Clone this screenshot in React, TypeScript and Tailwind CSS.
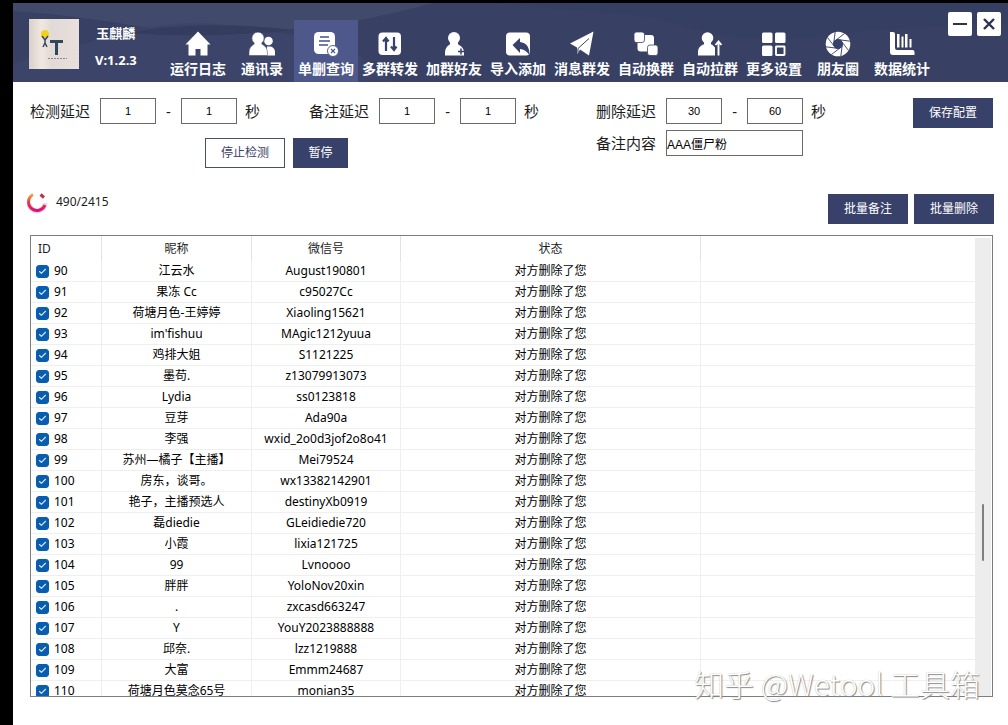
import type { ReactNode } from 'react'
import { Check } from 'lucide-react'

// ─── Data ────────────────────────────────────────────────────────────────────

const ROWS: [number, string, string][] = [
  [90, '江云水', 'August190801'],
  [91, '果冻 Cc', 'c95027Cc'],
  [92, '荷塘月色-王婷婷', 'Xiaoling15621'],
  [93, "im'fishuu", 'MAgic1212yuua'],
  [94, '鸡排大姐', 'S1121225'],
  [95, '墨苟.', 'z13079913073'],
  [96, 'Lydia', 'ss0123818'],
  [97, '豆芽', 'Ada90a'],
  [98, '李强', 'wxid_2o0d3jof2o8o41'],
  [99, '苏州—橘子【主播】', 'Mei79524'],
  [100, '房东，谈哥。', 'wx13382142901'],
  [101, '艳子，主播预选人', 'destinyXb0919'],
  [102, '磊diedie', 'GLeidiedie720'],
  [103, '小霞', 'lixia121725'],
  [104, '99', 'Lvnoooo'],
  [105, '胖胖', 'YoloNov20xin'],
  [106, '.', 'zxcasd663247'],
  [107, 'Y', 'YouY2023888888'],
  [108, '邱奈.', 'lzz1219888'],
  [109, '大富', 'Emmm24687'],
  [110, '荷塘月色莫念65号', 'monian35'],
]

const STATUS = '对方删除了您'

// ─── Toolbar icons ───────────────────────────────────────────────────────────

function Icon({ children }: { children: ReactNode }) {
  return (
    <svg viewBox="0 0 26 26" className="h-[26px] w-[26px]" fill="#fff" aria-hidden>
      {children}
    </svg>
  )
}

const INK = '#38416a'

const NAV: { label: string; icon: ReactNode }[] = [
  {
    label: '运行日志',
    icon: <path d="M13 0.5 25.5 13.5H22.5V24.5H15.5V18H10.5V24.5H3.5V13.5H0.5Z" />,
  },
  {
    label: '通讯录',
    icon: (
      <>
        <circle cx="19.5" cy="10" r="4.3" />
        <path d="M18 15.5h4q4 1.500 4 5.500v3.500h-8z" />
        <circle cx="9" cy="7.2" r="6.2" stroke={INK} strokeWidth="0.8" />
        <path
          d="M5 13h8q5.500 3 5.500 8v3.500H0V21q0-5 5-8z"
          stroke={INK}
          strokeWidth="0.5"
        />
        <path d="M5.500 11h7v4h-7z" />
      </>
    ),
  },
  {
    label: '单删查询',
    icon: (
      <>
        <rect x="1" y="1" width="21" height="22" rx="4.500" />
        <path d="M7 6h9M6 10h11M6 14h9" stroke="#46508a" strokeWidth="1.400" fill="none" />
        <circle cx="20" cy="20" r="5.500" stroke="#46508a" strokeWidth="0.900" />
        <path d="m18 18 4 4m0-4-4 4" stroke="#46508a" strokeWidth="1.100" />
      </>
    ),
  },
  {
    label: '多群转发',
    icon: (
      <>
        <rect x="1.500" y="1.500" width="22.500" height="22.500" rx="4" />
        <path
          d="M9 20V8M6 10.500 9 7l2.500 3.500M17 6v12M14 15.500l3 3.500 2.500-3.500"
          stroke={INK}
          strokeWidth="2.200"
          fill="none"
        />
      </>
    ),
  },
  {
    label: '加群好友',
    icon: (
      <>
        <circle cx="13" cy="7" r="6" />
        <path d="M9 11h8v3H9z" />
        <path d="M8.500 13.500h9q5.500 3 5.500 8v3H4v-3q0-5 4.500-8z" />
        <path d="M20 17.500v6M17 20.500h6" stroke={INK} strokeWidth="1.500" />
      </>
    ),
  },
  {
    label: '导入添加',
    icon: (
      <>
        <rect x="1" y="1.500" width="24" height="23" rx="4" />
        <path d="M15 7v4q9.500 1 9.500 13-4.500-6-9.500-6v4L7.500 14Z" fill={INK} />
      </>
    ),
  },
  {
    label: '消息群发',
    icon: (
      <>
        <path d="M24.500 0.500 20 24.500 11 18.500 8.500 23 8 16.500 1 12.500Z" />
        <path d="M20 7.500 9 17.500v4" stroke={INK} strokeWidth="1" fill="none" />
      </>
    ),
  },
  {
    label: '自动换群',
    icon: (
      <>
        <rect x="4.500" y="4" width="16.500" height="16.500" rx="3" />
        <rect x="1" y="1" width="10.500" height="10.500" rx="2.500" stroke={INK} strokeWidth="0.800" />
        <rect x="14.500" y="14" width="10.500" height="10.500" rx="2.500" stroke={INK} strokeWidth="0.800" />
      </>
    ),
  },
  {
    label: '自动拉群',
    icon: (
      <>
        <circle cx="10.500" cy="7" r="5.800" />
        <path d="M7 11h7v3H7z" />
        <path d="M6 13.500h9l3 3v8H1v-4q0-4.500 5-7z" />
        <path d="M21.500 24.500V11M18.500 14l3-3.500 3 3.500" stroke={INK} strokeWidth="4" fill="none" />
        <path d="M21.500 24.500V11M18.500 14l3-3.500 3 3.500" stroke="#fff" strokeWidth="1.900" fill="none" />
      </>
    ),
  },
  {
    label: '更多设置',
    icon: (
      <>
        <rect x="1" y="1.500" width="10.500" height="10.500" rx="1.500" />
        <rect x="14" y="1.500" width="10.500" height="10.500" rx="1.500" />
        <rect x="1" y="14.500" width="10.500" height="10.500" rx="1.500" />
        <rect x="15" y="15.500" width="8.500" height="8.500" rx="0.500" fill="none" stroke="#fff" strokeWidth="1.900" />
      </>
    ),
  },
  {
    label: '朋友圈',
    icon: (
      <>
        <circle cx="13" cy="13" r="12.300" />
        <circle cx="13" cy="13" r="4.800" fill={INK} />
        {[0, 45, 90, 135, 180, 225, 270, 315].map(a => (
          <path key={a} d="M8.500 11 19.500 2.500" transform={`rotate(${a} 13 13)`} stroke={INK} strokeWidth="0.900" />
        ))}
      </>
    ),
  },
  {
    label: '数据统计',
    icon: (
      <path d="M1 1h3q2 0 2 2v14q0 2 2 2h15.500q2 0 2 2v3H4q-3 0-3-3zM8 3h2.500v13.500H8zM12.500 5.500h2v11h-2zM16 3h2.500v13.500H16zM20.500 8h2v8.500h-2z" />
    ),
  },
]

function Logo() {
  return (
    <svg viewBox="0 0 50 50" className="h-[50px] w-[50px] shrink-0" role="img" aria-label="logo">
      <defs>
        <linearGradient id="paper" x1="0" x2="1" y1="0" y2="0">
          <stop offset="0" stopColor="#d9cfca" />
          <stop offset="0.25" stopColor="#f0e8e0" />
          <stop offset="0.45" stopColor="#e2dad6" />
          <stop offset="1" stopColor="#e9dfdc" />
        </linearGradient>
      </defs>
      <rect width="50" height="50" fill="url(#paper)" />
      <circle cx="16" cy="15" r="4" fill="#f0d21c" />
      <path d="m13 17 3 4 3-4M16 20v5M14 28l2-4 2 4" stroke="#3a4766" strokeWidth="1.500" fill="none" />
      <path d="M21 22.500h13M27.500 22v14" stroke="#31475c" strokeWidth="3" />
      <path d="M19 39.500h19" stroke="#8c8589" strokeWidth="1" strokeDasharray="2 1" />
    </svg>
  )
}

function Backdrop() {
  return (
    <svg
      viewBox="0 0 995 79"
      preserveAspectRatio="none"
      className="absolute inset-0 h-full w-full"
      aria-hidden
    >
      <rect width="995" height="79" fill="#384163" />
      <path d="M0 0h420Q340 22 270 27T130 24Q60 12 0 8z" fill="#424a6c" />
      <path d="M0 60Q50 46 110 30T230 24 330 40L380 79H0z" fill="#3c4569" />
      <path d="M110 30Q190 16 280 27 200 36 110 30z" fill="#343d5e" />
      <path d="M480 0h515v20Q870 24 800 34T640 14z" fill="#353f62" />
    </svg>
  )
}

// ─── Form pieces ─────────────────────────────────────────────────────────────

const BOX = 'h-[26px] border border-[#6a6a6a] bg-white text-black outline-none'
const SOLID = 'h-[30px] bg-[#38416a] text-xs text-white'

function DelayRange({ label, from, to }: { label: string; from: string; to: string }) {
  return (
    <fieldset className="flex items-center text-[15px]">
      <label className="flex items-center gap-2.5">
        {label}
        <input className={`${BOX} w-14 text-center font-['Liberation_Sans',sans-serif] text-[11px]`} defaultValue={from} />
      </label>
      <span className="w-[25px] text-center">-</span>
      <label className="flex items-center gap-2">
        <input className={`${BOX} w-14 text-center font-['Liberation_Sans',sans-serif] text-[11px]`} defaultValue={to} />
        秒
      </label>
    </fieldset>
  )
}

export default function App() {
  return (
    <div className="flex h-screen flex-col bg-black pt-[3px] pl-[13px] font-['Noto_Sans','Noto_Sans_CJK_SC',sans-serif] text-[#1c1c1c]">
      <header className="relative h-[79px] shrink-0">
        <Backdrop />
        <div className="relative flex h-full text-white">
          <div className="flex w-[153px] items-start gap-4 pt-4 pl-4">
            <Logo />
            <div className="flex flex-col items-center gap-[7px] pt-1 text-[13px] leading-5 font-bold">
              <span>玉麒麟</span>
              <span>V:1.2.3</span>
            </div>
          </div>
          <nav className="flex pt-[17px]">
            {NAV.map(({ label, icon }) => (
              <button
                key={label}
                className={`flex w-16 flex-col items-center justify-start gap-0.5 pt-[11px] text-sm leading-5 font-bold whitespace-nowrap ${
                  label === '单删查询' ? 'bg-[#4e588a]' : ''
                }`}
              >
                <Icon>{icon}</Icon>
                {label}
              </button>
            ))}
          </nav>
          <div className="ml-auto flex gap-[5px] pt-[9px] pr-[7px]">
            <button aria-label="最小化" className="h-6 w-6 rounded-xs bg-white">
              <svg viewBox="0 0 24 24" stroke="#2c3350" strokeWidth="2">
                <path d="M5 12h14" />
              </svg>
            </button>
            <button aria-label="关闭" className="h-6 w-6 rounded-xs bg-white">
              <svg viewBox="0 0 24 24" stroke="#2c3350" strokeWidth="2.400">
                <path d="m7 7 10 10M17 7 7 17" />
              </svg>
            </button>
          </div>
        </div>
      </header>

      <main className="relative flex min-h-0 flex-1 flex-col bg-white pt-4 pr-[15px] pb-7 pl-[17px]">
        <div className="flex items-start">
          <div>
            <div className="flex gap-[49px]">
              <DelayRange label="检测延迟" from="1" to="1" />
              <DelayRange label="备注延迟" from="1" to="1" />
            </div>
            <div className="mt-3.5 ml-[175px] flex gap-2">
              <button className="h-[30px] w-20 border border-[#4a4f63] bg-white text-xs text-[#38416a]">停止检测</button>
              <button className={`${SOLID} w-[55px]`}>暂停</button>
            </div>
          </div>
          <div className="ml-[57px] flex flex-col gap-1.5">
            <DelayRange label="删除延迟" from="30" to="60" />
            <label className="flex items-center gap-2.5 text-[15px]">
              备注内容
              <input
                className={`${BOX} w-[137px] font-['Liberation_Sans','Noto_Sans_CJK_SC',sans-serif] text-xs`}
                defaultValue="AAA僵尸粉"
              />
            </label>
          </div>
          <button className={`${SOLID} ml-auto w-20`}>保存配置</button>
        </div>

        <div className="mt-[22px] mb-[11px] flex items-start justify-between">
          <div className="flex items-center gap-2">
            <svg viewBox="0 0 22 24" className="-ml-1 h-6 w-[22px]" fill="none" strokeWidth="3" aria-hidden>
              <defs>
                <linearGradient id="spin" x1="0" x2="0" y1="0" y2="1">
                  <stop offset="0" stopColor="#f2a33c" />
                  <stop offset="0.5" stopColor="#dd3a4c" />
                  <stop offset="1" stopColor="#d9127a" />
                </linearGradient>
              </defs>
              <circle cx="11" cy="13" r="8" stroke="#fbd3e3" strokeWidth="5" strokeDasharray="25 26" />
              <path d="M7 4.500A8.500 8.500 0 1 0 19 15" stroke="url(#spin)" />
              <path d="m14.500 4.500 3.500 3" stroke="#b8324a" />
            </svg>
            <span className="text-xs">490/2415</span>
          </div>
          <div className="-mr-px flex gap-1.5 pt-1">
            <button className={`${SOLID} w-20`}>批量备注</button>
            <button className={`${SOLID} w-20`}>批量删除</button>
          </div>
        </div>

        <div className="flex min-h-0 flex-1 border border-[#7d7d7d]">
          <div className="min-w-0 flex-1 overflow-hidden">
            <table className="w-full table-fixed border-separate border-spacing-0 text-xs">
              <thead>
                <tr className="h-[25px]">
                  <th className="w-[71px] border-r border-[#e2e2e2] pl-[7px] text-left font-normal">ID</th>
                  <th className="w-[150px] border-r border-[#e2e2e2] p-0 font-normal">昵称</th>
                  <th className="w-[149px] border-r border-[#e2e2e2] p-0 font-normal">微信号</th>
                  <th className="w-[300px] border-r border-[#e2e2e2] p-0 font-normal">状态</th>
                  <th />
                </tr>
              </thead>
              <tbody>
                {ROWS.map(([id, name, wx]) => (
                  <tr key={id} className="h-[21px] text-center leading-5 text-black">
                    <td className="border-r border-b border-[#efefef] p-0 pl-[5px]">
                      <label className="flex items-center gap-[5px]">
                        <span className="grid">
                          <input
                            type="checkbox"
                            defaultChecked
                            className="peer col-start-1 row-start-1 h-[13px] w-[13px] appearance-none rounded-[3px] border border-[#005fb8] checked:bg-[#0a5cad]"
                          />
                          <Check
                            className="pointer-events-none invisible col-start-1 row-start-1 m-auto h-[9px] w-[9px] text-[#d6e8f8] peer-checked:visible"
                            strokeWidth={3}
                          />
                        </span>
                        {id}
                      </label>
                    </td>
                    <td className="truncate border-r border-b border-[#efefef] p-0">{name}</td>
                    <td className="truncate border-r border-b border-[#efefef] p-0">{wx}</td>
                    <td className="border-r border-b border-[#efefef] p-0">{STATUS}</td>
                    <td className="border-b border-[#efefef] p-0" />
                  </tr>
                ))}
              </tbody>
            </table>
          </div>
          <div className="mt-0.5 mr-px flex w-4 flex-col items-center bg-[#ededed]">
            <div className="h-[58%]" />
            <div className="h-[57px] w-0.5 rounded-full bg-[#808080]" />
          </div>
        </div>

        <div className="pointer-events-none absolute right-7 bottom-5 font-['Noto_Sans_CJK_SC',sans-serif] text-[30px] leading-[44px] font-light text-white [text-shadow:1px_1px_1px_#888,0_0_1px_#bbb]">
          知乎 @Wetool 工具箱
        </div>
      </main>
    </div>
  )
}
